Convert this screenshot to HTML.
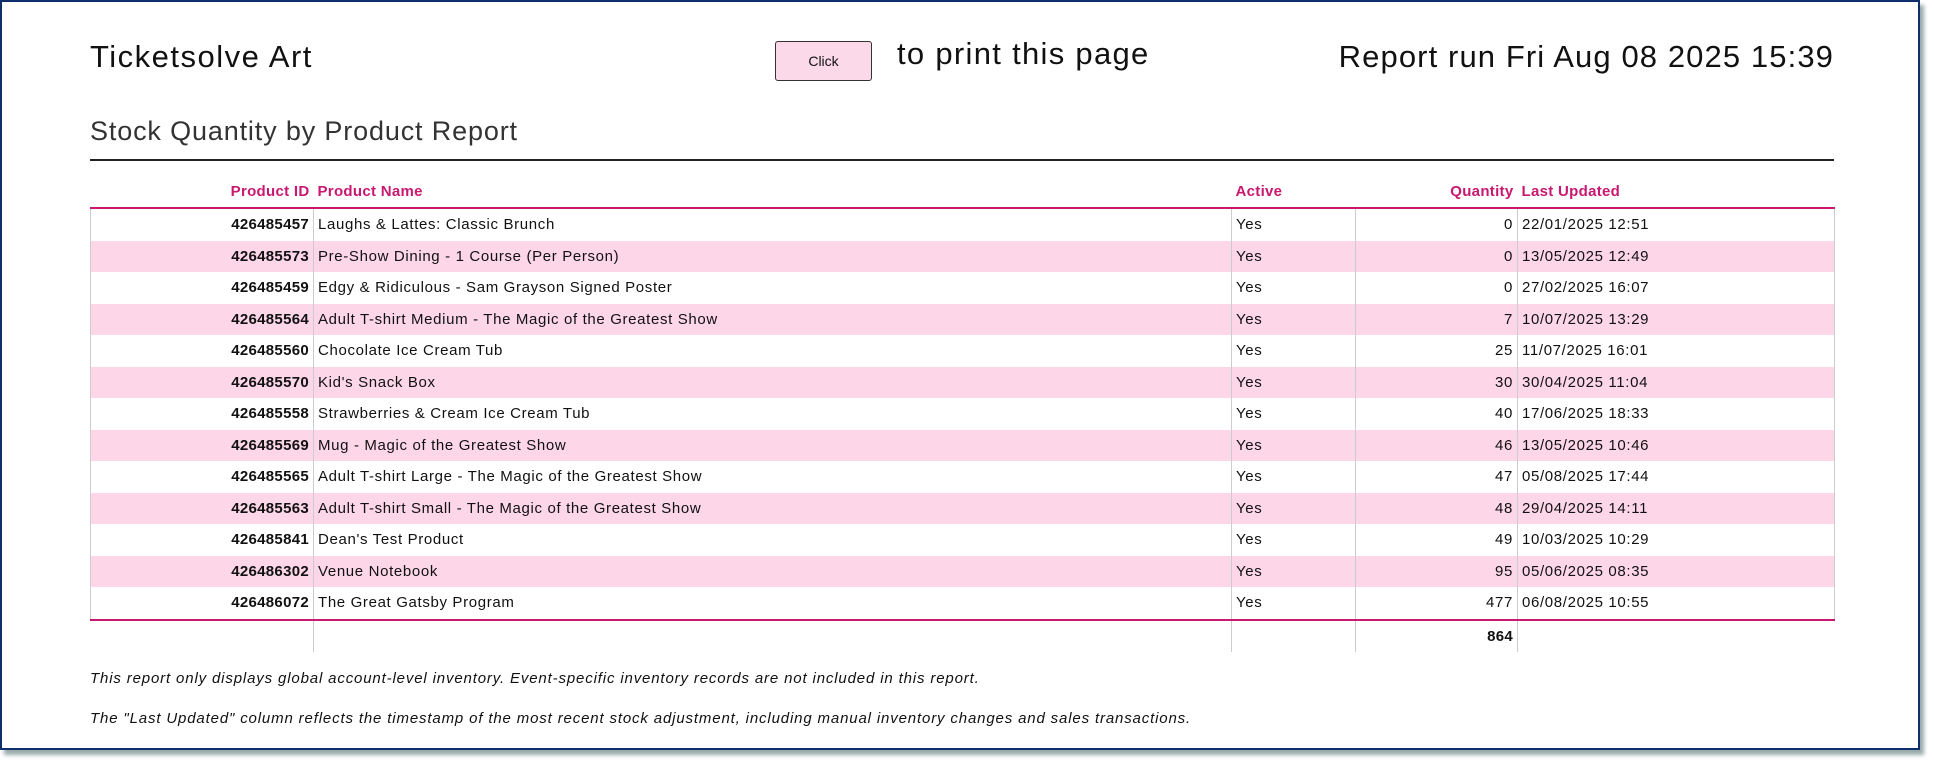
<!DOCTYPE html>
<html><head><meta charset="utf-8"><style>
html,body{margin:0;padding:0;width:1934px;height:761px;background:#fff;overflow:hidden;font-family:"Liberation Sans",sans-serif;}
.frame{position:absolute;left:0;top:0;width:1916px;height:746px;border:2px solid #0e2f6b;background:#fff;box-shadow:4px 5px 4px #9aa;}
.abs{position:absolute;white-space:nowrap;}
.big{font-size:31px;color:#111;}
.btn{position:absolute;left:775px;top:41px;width:95px;height:38px;background:#fcd9e8;border:1px solid #333;border-radius:3px;font-size:14px;text-align:center;line-height:38px;color:#111;}
.hr{position:absolute;left:90px;top:159px;width:1744px;height:2px;background:#222;}
table{position:absolute;left:90px;top:175px;width:1744px;border-collapse:collapse;table-layout:fixed;font-size:15px;color:#111;}
th{color:#c8186f;font-weight:bold;height:32px;padding:0 4px;text-align:left;border-bottom:2px solid #c8186f;letter-spacing:0.3px;}
td{height:31.5px;padding:0 4px 0 4px;border-left:1px solid #ccc;border-right:1px solid #ccc;letter-spacing:0.65px;}
td.b{letter-spacing:0.3px;}
tbody tr:nth-child(even) td{background:#fdd7e8;}
tbody tr:last-child td{border-bottom:2px solid #c8186f;}
.r{text-align:right;}
.b{font-weight:bold;}
tfoot td{height:31px;}
.note{position:absolute;left:90px;font-style:italic;font-size:15px;color:#111;letter-spacing:0.85px;white-space:nowrap;}
</style></head><body>
<div class="frame"></div>
<div class="abs big" style="left:90px;top:39px;letter-spacing:1.5px;">Ticketsolve Art</div>
<div class="btn">Click</div>
<div class="abs big" style="left:897px;top:36px;letter-spacing:1.3px;">to print this page</div>
<div class="abs big" style="right:100px;top:39px;letter-spacing:1.1px;">Report run Fri Aug 08 2025 15:39</div>
<div class="abs" style="left:90px;top:116px;font-size:27px;color:#333;letter-spacing:0.85px;">Stock Quantity by Product Report</div>
<div class="hr"></div>
<table>
<colgroup><col style="width:223px"><col style="width:918px"><col style="width:124px"><col style="width:162px"><col style="width:317px"></colgroup>
<thead><tr><th class="r">Product ID</th><th>Product Name</th><th>Active</th><th class="r">Quantity</th><th>Last Updated</th></tr></thead>
<tbody>
<tr><td class="r b">426485457</td><td>Laughs &amp; Lattes: Classic Brunch</td><td>Yes</td><td class="r">0</td><td>22/01/2025 12:51</td></tr>
<tr><td class="r b">426485573</td><td>Pre-Show Dining - 1 Course (Per Person)</td><td>Yes</td><td class="r">0</td><td>13/05/2025 12:49</td></tr>
<tr><td class="r b">426485459</td><td>Edgy &amp; Ridiculous - Sam Grayson Signed Poster</td><td>Yes</td><td class="r">0</td><td>27/02/2025 16:07</td></tr>
<tr><td class="r b">426485564</td><td>Adult T-shirt Medium - The Magic of the Greatest Show</td><td>Yes</td><td class="r">7</td><td>10/07/2025 13:29</td></tr>
<tr><td class="r b">426485560</td><td>Chocolate Ice Cream Tub</td><td>Yes</td><td class="r">25</td><td>11/07/2025 16:01</td></tr>
<tr><td class="r b">426485570</td><td>Kid's Snack Box</td><td>Yes</td><td class="r">30</td><td>30/04/2025 11:04</td></tr>
<tr><td class="r b">426485558</td><td>Strawberries &amp; Cream Ice Cream Tub</td><td>Yes</td><td class="r">40</td><td>17/06/2025 18:33</td></tr>
<tr><td class="r b">426485569</td><td>Mug - Magic of the Greatest Show</td><td>Yes</td><td class="r">46</td><td>13/05/2025 10:46</td></tr>
<tr><td class="r b">426485565</td><td>Adult T-shirt Large - The Magic of the Greatest Show</td><td>Yes</td><td class="r">47</td><td>05/08/2025 17:44</td></tr>
<tr><td class="r b">426485563</td><td>Adult T-shirt Small - The Magic of the Greatest Show</td><td>Yes</td><td class="r">48</td><td>29/04/2025 14:11</td></tr>
<tr><td class="r b">426485841</td><td>Dean's Test Product</td><td>Yes</td><td class="r">49</td><td>10/03/2025 10:29</td></tr>
<tr><td class="r b">426486302</td><td>Venue Notebook</td><td>Yes</td><td class="r">95</td><td>05/06/2025 08:35</td></tr>
<tr><td class="r b">426486072</td><td>The Great Gatsby Program</td><td>Yes</td><td class="r">477</td><td>06/08/2025 10:55</td></tr>
</tbody>
<tfoot><tr><td style="border-left:none"></td><td></td><td></td><td class="r b">864</td><td style="border-right:none"></td></tr></tfoot>
</table>
<div class="note" style="top:670px;">This report only displays global account-level inventory. Event-specific inventory records are not included in this report.</div>
<div class="note" style="top:710px;">The "Last Updated" column reflects the timestamp of the most recent stock adjustment, including manual inventory changes and sales transactions.</div>
</body></html>
